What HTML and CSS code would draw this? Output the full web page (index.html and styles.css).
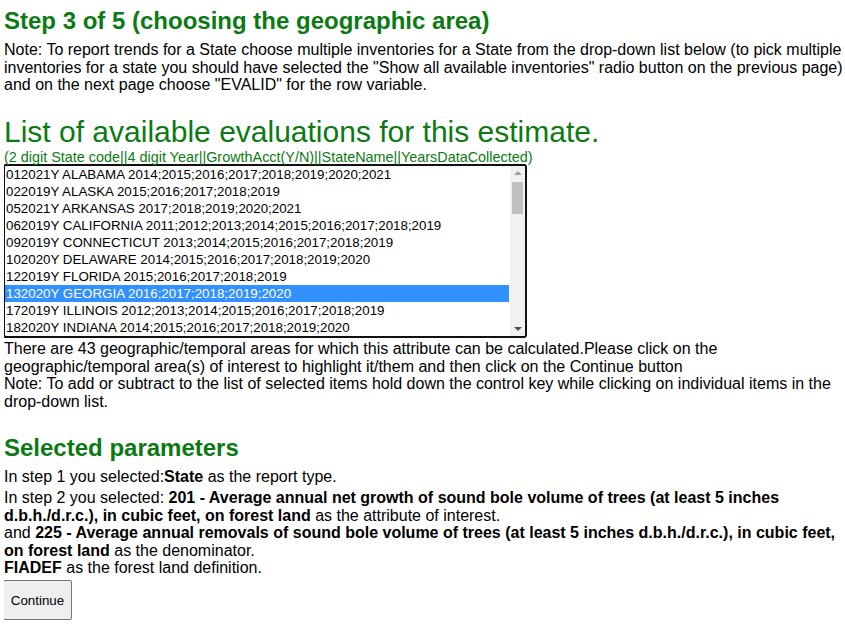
FILE: index.html
```html
<!DOCTYPE html>
<html>
<head>
<meta charset="utf-8">
<link rel="stylesheet" href="styles.css">
</head>
<body>
<h2 class="step">Step 3 of 5 (choosing the geographic area)</h2>
<p class="note">Note: To report trends for a State choose multiple inventories for a State from the drop-down list below (to pick multiple inventories for a state you should have selected the "Show all available inventories" radio button on the previous page) and on the next page choose "EVALID" for the row variable.</p>
<h1 class="list-title">List of available evaluations for this estimate.</h1>
<div class="legend">(2 digit State code||4 digit Year||GrowthAcct(Y/N)||StateName||YearsDataCollected)</div>
<div class="listbox">
  <div class="options">
    <div class="opt">012021Y ALABAMA 2014;2015;2016;2017;2018;2019;2020;2021</div>
    <div class="opt">022019Y ALASKA 2015;2016;2017;2018;2019</div>
    <div class="opt">052021Y ARKANSAS 2017;2018;2019;2020;2021</div>
    <div class="opt">062019Y CALIFORNIA 2011;2012;2013;2014;2015;2016;2017;2018;2019</div>
    <div class="opt">092019Y CONNECTICUT 2013;2014;2015;2016;2017;2018;2019</div>
    <div class="opt">102020Y DELAWARE 2014;2015;2016;2017;2018;2019;2020</div>
    <div class="opt">122019Y FLORIDA 2015;2016;2017;2018;2019</div>
    <div class="opt selected">132020Y GEORGIA 2016;2017;2018;2019;2020</div>
    <div class="opt">172019Y ILLINOIS 2012;2013;2014;2015;2016;2017;2018;2019</div>
    <div class="opt">182020Y INDIANA 2014;2015;2016;2017;2018;2019;2020</div>
  </div>
  <div class="scrollbar">
    <div class="arrow up"></div>
    <div class="track"><div class="thumb"></div></div>
    <div class="arrow down"></div>
  </div>
</div>
<p class="info">There are 43 geographic/temporal areas for which this attribute can be calculated.Please click on the geographic/temporal area(s) of interest to highlight it/them and then click on the Continue button<br>Note: To add or subtract to the list of selected items hold down the control key while clicking on individual items in the drop-down list.</p>
<h2 class="params">Selected parameters</h2>
<div class="line">In step 1 you selected:<b>State</b> as the report type.</div>
<div class="line gap">In step 2 you selected: <b>201 - Average annual net growth of sound bole volume of trees (at least 5 inches d.b.h./d.r.c.), in cubic feet, on forest land</b> as the attribute of interest.<br>and <b>225 - Average annual removals of sound bole volume of trees (at least 5 inches d.b.h./d.r.c.), in cubic feet, on forest land</b> as the denominator.<br><b>FIADEF</b> as the forest land definition.</div>
<button class="continue">Continue</button>
</body>
</html>
```
FILE: styles.css
```css
body {
  margin: 4px 0 4px 4px;
  font-family: "Liberation Sans", Arial, sans-serif;
  font-size: 16px;
  line-height: 17.5px;
  color: #000;
  background: #fff;
}
.step {
  color: #0b7a13;
  font-size: 24px;
  line-height: 26px;
  font-weight: bold;
  margin: 4px 0 7px 0;
}
.note {
  margin: 0;
  padding-right: 2px;
}
.list-title {
  color: #0b7a13;
  font-size: 30px;
  line-height: 36px;
  font-weight: normal;
  margin: 20.5px 0 0 0;
}
.legend {
  color: #0b7a13;
  font-size: 14.4px;
  line-height: 14px;
  margin-top: 0;
  white-space: nowrap;
}
.listbox {
  width: 520px;
  height: 170px;
  border: 2px solid #111;
  border-radius: 3px;
  display: flex;
  margin-left: -1px;
  overflow: hidden;
}
.options {
  flex: 1;
  padding: 0 1px 0 0;
}
.opt {
  font-size: 13.33px;
  line-height: 17px;
  height: 17px;
  white-space: nowrap;
  padding-left: 1px;
  color: #000;
}
.opt.selected {
  background: #3390ff;
  color: #fff;
}
.scrollbar {
  width: 15px;
  background: #f1f1f1;
  display: flex;
  flex-direction: column;
}
.arrow {
  height: 15px;
  position: relative;
}
.arrow::after {
  content: "";
  position: absolute;
  left: 4px;
  width: 0;
  height: 0;
  border-left: 4px solid transparent;
  border-right: 4px solid transparent;
}
.arrow.up::after {
  top: 5px;
  border-bottom: 4px solid #a3a3a3;
}
.arrow.down::after {
  top: 6px;
  border-top: 4px solid #505050;
}
.track {
  flex: 1;
  padding: 1px 2px;
}
.thumb {
  height: 32px;
  background: #c1c1c1;
}
.info {
  margin: 2px 0 0 0;
  padding-right: 8px;
}
.params {
  color: #0b7a13;
  font-size: 24px;
  line-height: 28px;
  font-weight: bold;
  margin: 24px 0 6px 0;
}
.line {
  margin: 0;
  padding-right: 2px;
}
.gap {
  margin-top: 3.5px;
}
.continue {
  display: block;
  margin: 3.5px 0 0 -1px;
  width: 69px;
  height: 40px;
  font-family: "Liberation Sans", Arial, sans-serif;
  font-size: 13.33px;
  background: #efefef;
  border: 1px solid #767676;
  border-radius: 2px;
  color: #000;
  padding: 0;
}
```
